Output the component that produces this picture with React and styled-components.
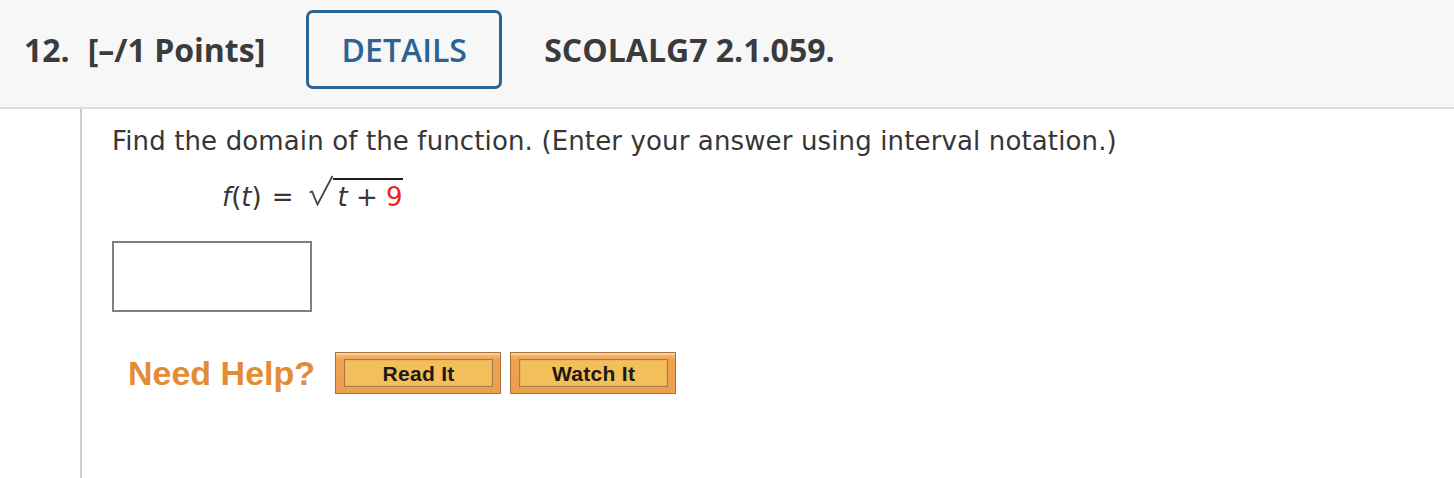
import React from "react";
import styled, { createGlobalStyle } from "styled-components";

const Global = createGlobalStyle`
  html, body { margin: 0; padding: 0; background: #fff; }
  body { width: 1454px; height: 478px; overflow: hidden; }
`;

const Page = styled.div`
  display: flex;
  flex-direction: column;
  height: 478px;
`;

const Header = styled.header`
  display: flex;
  align-items: center;
  height: 109px;
  box-sizing: border-box;
  padding: 10px 24px 19px 24px;
  background: #f7f7f7;
  border-bottom: 2px solid #dddddd;
  font-family: "Open Sans", sans-serif;
  font-weight: 700;
  font-size: 32px;
  color: #3b3b3b;
`;

const Number = styled.span`
  margin-right: 18px;
`;

const Points = styled.span`
  margin-right: 41px;
`;

const DetailsButton = styled.button`
  box-sizing: border-box;
  height: 79px;
  width: 196px;
  border: 3px solid #2b6394;
  border-radius: 7px;
  background: #f7f7f7;
  color: #2b6394;
  font-family: "Open Sans", sans-serif;
  font-weight: 600;
  font-size: 32px;
  padding: 0;
  margin-right: 42px;
`;

const Code = styled.span``;

const Body = styled.main`
  flex: 1;
  margin-left: 80px;
  border-left: 2px solid #cccccc;
  padding: 14px 0 0 30px;
  font-family: "DejaVu Sans", Verdana, sans-serif;
  font-size: 26px;
  color: #363636;
`;

const Prompt = styled.p`
  margin: 0;
  line-height: 36px;
  letter-spacing: 0.13px;
`;

const MathLine = styled.div`
  display: flex;
  align-items: baseline;
  height: 40px;
  margin: 16px 0 0 110px;
  line-height: 36px;
`;

const It = styled.i`
  font-style: italic;
`;

const Eq = styled.span`
  margin: 0 16px 0 10px;
`;

const Radical = styled.span`
  display: inline-flex;
  align-items: baseline;
`;

const RadSign = styled.svg`
  display: inline-block;
  width: 24px;
  height: 31px;
  margin-bottom: -2px;
`;

const Radicand = styled.span`
  border-top: 2px solid #1e1e1e;
  padding: 0 0 0 4px;
  line-height: 35px;
`;

const Red = styled.span`
  color: #e8261d;
`;

const AnswerBox = styled.input`
  display: block;
  box-sizing: border-box;
  width: 200px;
  height: 71px;
  margin-top: 26px;
  border: 2px solid #808080;
  border-radius: 0;
  background: #fff;
  outline: none;
`;

const HelpRow = styled.div`
  display: flex;
  align-items: center;
  gap: 9px;
  margin-top: 40px;
  margin-left: 16px;
`;

const NeedHelp = styled.span`
  font-family: "Liberation Sans", Arial, sans-serif;
  font-weight: 700;
  font-size: 34px;
  color: #e38c34;
  margin-right: 11px;
`;

const HelpButton = styled.button`
  box-sizing: border-box;
  width: 166px;
  height: 42px;
  padding: 6px 7px 6px 8px;
  border: 1px solid #a8733a;
  background: linear-gradient(#f9dcb6 0px, #f2b36c 3px, #eea24f 7px, #eda04c 100%);
  display: flex;
  cursor: pointer;
`;

const HelpInner = styled.span`
  flex: 1;
  display: flex;
  align-items: center;
  justify-content: center;
  border: 1px solid #a97d4b;
  box-shadow: inset 0 0 0 1px #e9b25e;
  background: #f4bf5b;
  font-family: "Liberation Sans", Arial, sans-serif;
  font-weight: 700;
  font-size: 21px;
  letter-spacing: 0.3px;
  color: #1c1a14;
  padding-top: 2px;
`;

export default function App() {
  return (
    <>
      <Global />
      <Page>
        <Header>
          <Number>12.</Number>
          <Points>[–/1 Points]</Points>
          <DetailsButton>DETAILS</DetailsButton>
          <Code>SCOLALG7 2.1.059.</Code>
        </Header>
        <Body>
          <Prompt>
            Find the domain of the function. (Enter your answer using interval notation.)
          </Prompt>
          <MathLine>
            <span>
              <It>f</It>(<It>t</It>)
            </span>
            <Eq>=</Eq>
            <Radical>
              <RadSign viewBox="0 0 24 31" aria-hidden="true">
                <path
                  d="M0.5 17.5 L3 16.5 L8.5 29.5 L23.5 1"
                  fill="none"
                  stroke="#444"
                  strokeWidth="1.8"
                  strokeLinejoin="miter"
                />
              </RadSign>
              <Radicand>
                <It>t</It> + <Red>9</Red>
              </Radicand>
            </Radical>
          </MathLine>
          <AnswerBox type="text" aria-label="answer" />
          <HelpRow>
            <NeedHelp>Need Help?</NeedHelp>
            <HelpButton>
              <HelpInner>Read It</HelpInner>
            </HelpButton>
            <HelpButton>
              <HelpInner>Watch It</HelpInner>
            </HelpButton>
          </HelpRow>
        </Body>
      </Page>
    </>
  );
}
